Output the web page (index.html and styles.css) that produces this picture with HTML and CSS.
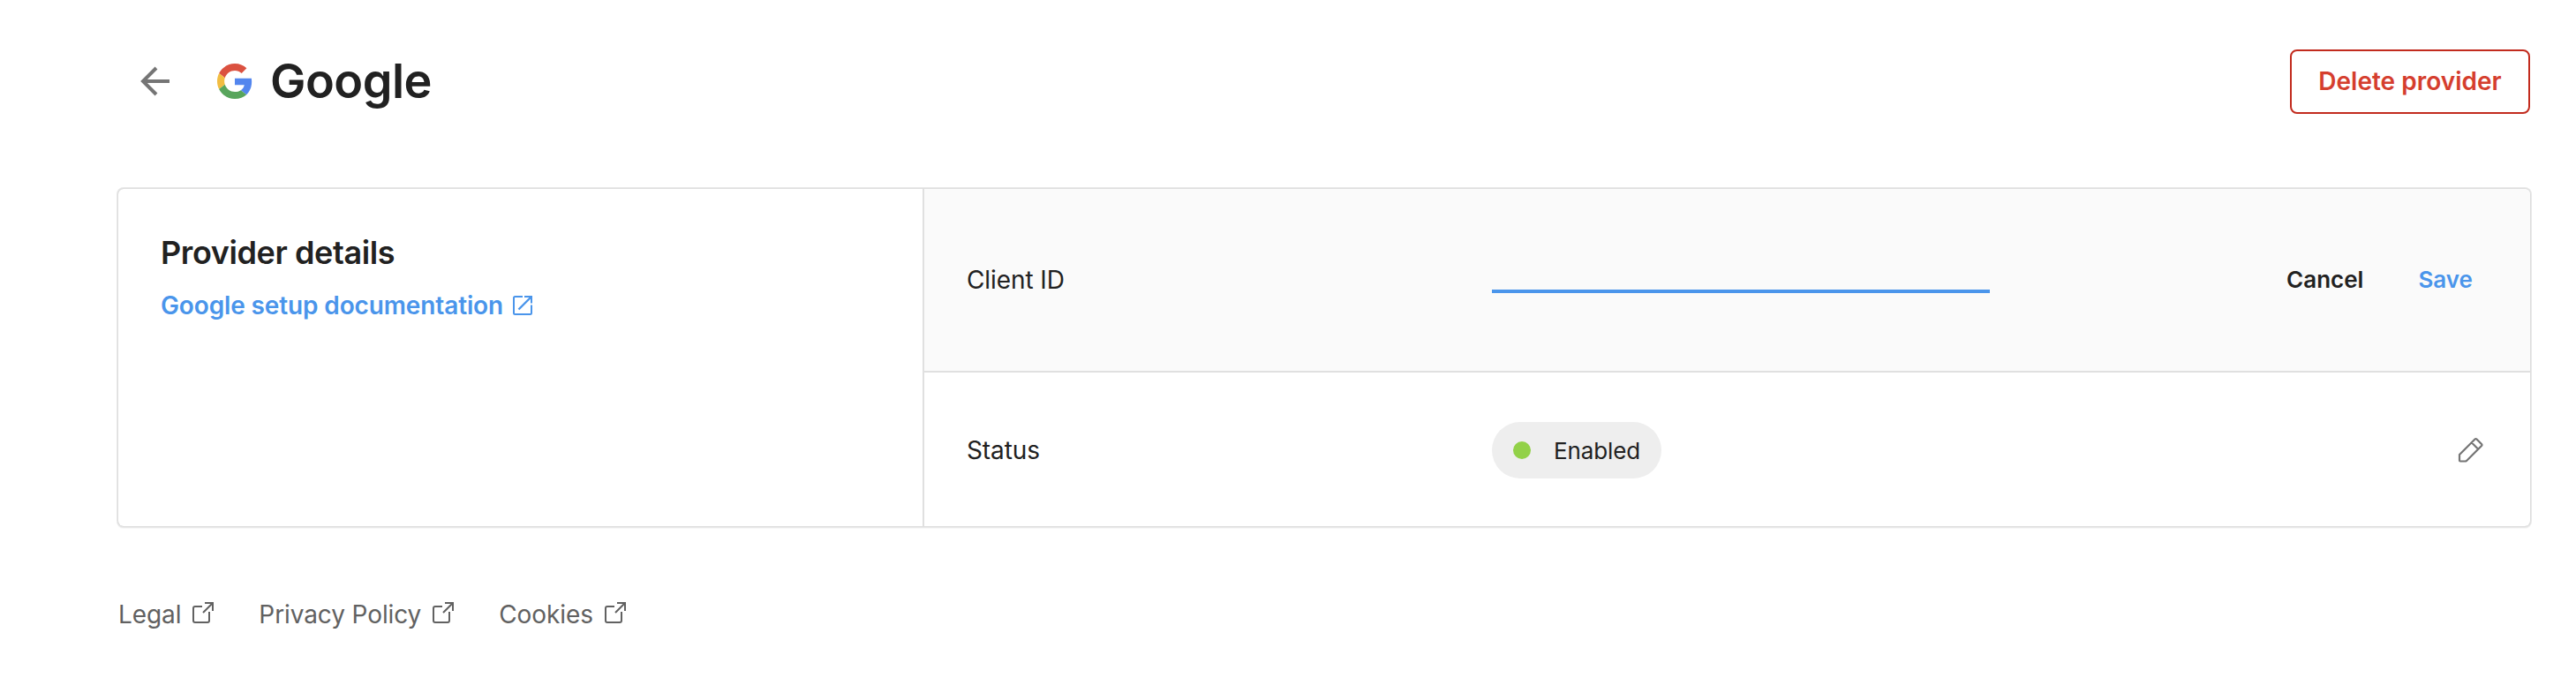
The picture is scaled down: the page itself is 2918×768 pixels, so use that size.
FILE: index.html
```html
<!DOCTYPE html>
<html lang="en">
<head>
<meta charset="utf-8">
<title>Google</title>
<link rel="stylesheet" href="styles.css">
</head>
<body>
<header class="header">
  <svg class="back" viewBox="0 0 36 36" fill="none" stroke="#757575" stroke-width="4"><path d="M34 18H4M19 3 4 18l15 15"/></svg>
  <svg class="logo" viewBox="0 0 48 48"><path fill="#DB5140" d="M24 9.5c3.54 0 6.71 1.22 9.21 3.6l6.85-6.85C35.9 2.38 30.47 0 24 0 14.62 0 6.51 5.38 2.56 13.22l7.98 6.19C12.43 13.72 17.74 9.5 24 9.5z"/><path fill="#5386EE" d="M46.98 24.55c0-1.57-.15-3.09-.38-4.55H24v9.02h12.94c-.58 2.96-2.26 5.48-4.78 7.18l7.73 6c4.51-4.18 7.09-10.36 7.09-17.65z"/><path fill="#F2BD42" d="M10.53 28.59c-.48-1.45-.76-2.99-.76-4.59s.27-3.14.76-4.59l-7.98-6.19C.92 16.46 0 20.12 0 24c0 3.88.92 7.54 2.56 10.78l7.97-6.19z"/><path fill="#58A55C" d="M24 48c6.48 0 11.93-2.13 15.89-5.81l-7.73-6c-2.15 1.45-4.92 2.3-8.16 2.3-6.26 0-11.57-4.22-13.47-9.91l-7.98 6.19C6.51 42.62 14.62 48 24 48z"/></svg>
  <h1 class="title">Google</h1>
  <button class="delete">Delete provider</button>
</header>
<main class="card">
  <section class="details">
    <h2 class="heading">Provider details</h2>
    <a class="doc"><span>Google setup documentation</span><svg class="doc-icon" viewBox="0 0 22 22" fill="none" stroke="currentColor" stroke-width="2"><path d="M11 1H2.500Q1 1 1 2.500v17Q1 21 2.500 21h17q1.500 0 1.500-1.500V10.500M13 1h8v7.500"/><path stroke-width="2.400" d="M20.500 1.500 6.500 15.500"/></svg></a>
  </section>
  <section class="rows">
    <div class="row row-edit">
      <span class="label">Client ID</span>
      <input class="field" type="text">
      <div class="actions"><button class="action">Cancel</button><button class="action save">Save</button></div>
    </div>
    <div class="row">
      <span class="label">Status</span>
      <span class="chip"><i class="dot"></i><span>Enabled</span></span>
      <svg class="edit" viewBox="0 0 30 30" fill="none" stroke="#757575" stroke-width="2.200" stroke-linejoin="round"><path d="M2 20 19.500 2.500q1-1 2 0l5.500 5.500q1 1 0 2L10 27l-1 .500H3q-1 0-1-1zM15.700 6.300l7.500 7.500"/></svg>
    </div>
  </section>
</main>
<footer class="footer">
  <a class="link"><span>Legal</span><svg class="ext" viewBox="0 0 24 24"><path d="M11 5H3Q1 5 1 7v14q0 2 2 2h14q2 0 2-2V11M14 1h9v9M22.500 1.500 12 12"/></svg></a>
  <a class="link"><span>Privacy Policy</span><svg class="ext" viewBox="0 0 24 24"><path d="M11 5H3Q1 5 1 7v14q0 2 2 2h14q2 0 2-2V11M14 1h9v9M22.500 1.500 12 12"/></svg></a>
  <a class="link"><span>Cookies</span><svg class="ext" viewBox="0 0 24 24"><path d="M11 5H3Q1 5 1 7v14q0 2 2 2h14q2 0 2-2V11M14 1h9v9M22.500 1.500 12 12"/></svg></a>
</footer>
</body>
</html>
```
FILE: styles.css
```css
* { box-sizing: border-box; }
body { margin: 0; padding: 56px 52px 0 134px; background: #fff; color: #212121; font-family: Inter, sans-serif; font-size: 28px; }
button { font: inherit; color: inherit; background: none; border: 0; padding: 0; }
.header { display: flex; align-items: center; height: 72px; padding-left: 24px; }
.back { width: 36px; height: 36px; }
.logo { width: 40px; height: 40px; margin-left: 52px; }
.title { margin: 0 0 0 20px; font-size: 54px; font-weight: 600; line-height: 72px; letter-spacing: -0.5px; }
.delete { align-self: flex-start; width: 272px; height: 73px; margin-left: auto; padding-bottom: 2px; border: 2px solid #c22b1e; border-radius: 8px; color: #d53e2e; font-weight: 600; }
.card { display: flex; height: 382px; margin-top: 86px; border-radius: 6px; box-shadow: 0 0 0 1px #dedede, 0 0 0 2px #e8e8e8, 0 1px 0 2px #f7f7f7; overflow: hidden; }
.details { width: 911px; padding: 47px 48px 0; }
.heading { margin: 0; font-size: 36px; font-weight: 600; line-height: 50px; letter-spacing: -0.4px; }
.doc { display: flex; align-items: center; margin-top: 15px; color: #4a95eb; font-weight: 600; line-height: 40px; letter-spacing: -0.13px; }
.doc-icon { width: 22px; height: 22px; margin-left: 11px; }
.rows { flex: 1; border-left: 2px solid #e0e0e0; }
.row { display: flex; align-items: center; height: 174px; padding: 2px 0 0 48px; }
.row-edit { height: 208px; padding-top: 0; background: #fafafa; border-bottom: 2px solid #e0e0e0; }
.label { width: 595px; letter-spacing: -0.1px; }
.field { width: 564px; height: 56px; margin-top: -26px; border: 0; border-bottom: 4px solid #4a95eb; background: none; padding: 0; outline: none; }
.actions { display: flex; gap: 62px; margin: 0 65px 1px auto; font-size: 26px; font-weight: 600; }
.save { color: #4a95eb; }
.chip { display: flex; align-items: center; width: 192px; height: 64px; padding-left: 24px; gap: 26px; border-radius: 32px; background: #eee; font-size: 26px; letter-spacing: -0.1px; }
.dot { width: 20px; height: 20px; border-radius: 50%; background: #92d148; }
.edit { width: 30px; height: 30px; margin-left: auto; margin-right: 52px; }
.footer { display: flex; gap: 51px; margin-top: 80px; color: #616161; line-height: 40px; letter-spacing: -0.1px; }
.link { display: flex; align-items: center; }
.ext { width: 24px; height: 24px; margin: 0 0 4px 13px; fill: none; stroke: currentColor; stroke-width: 2; }
```
